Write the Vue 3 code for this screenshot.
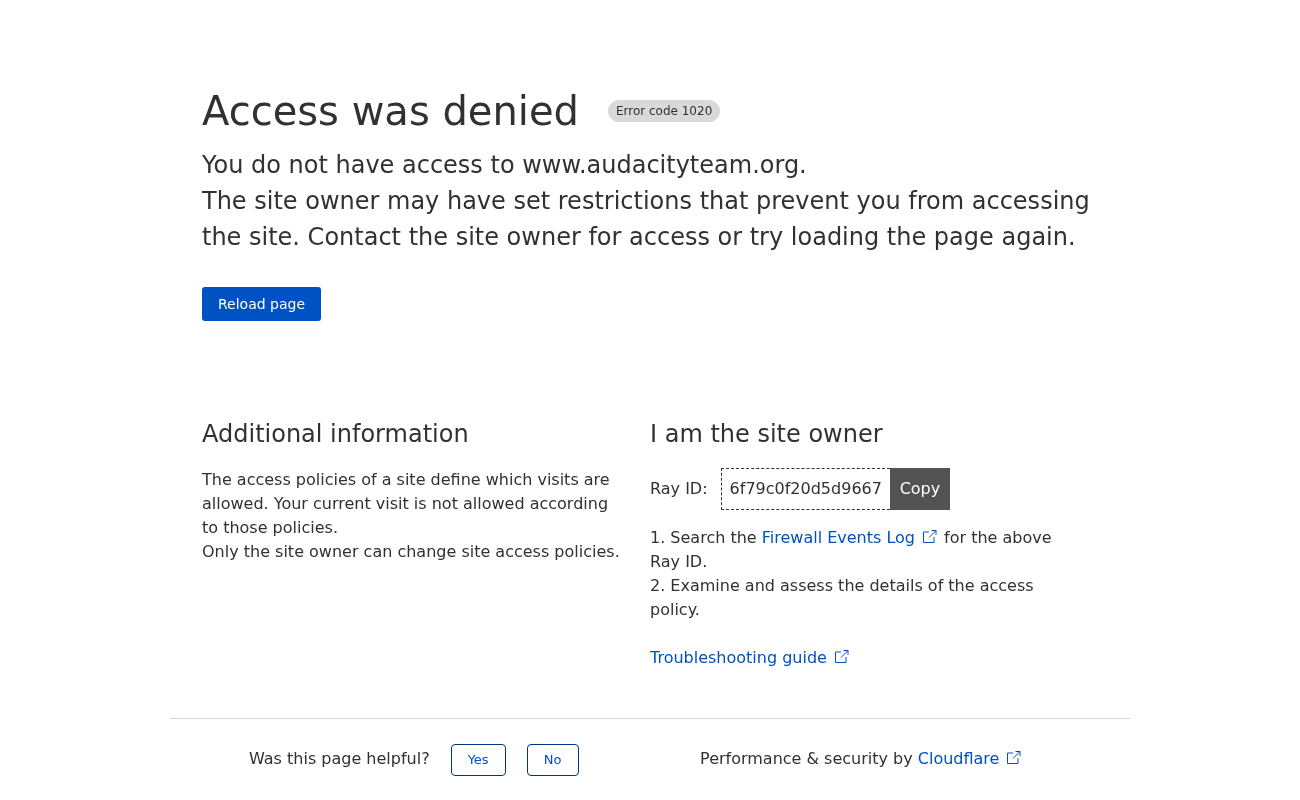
<script setup>
const steps = "M12 8v5.5H1.5V3H7M9.5 1.5H14V6M14 1.5L7 8.5";
</script>

<template>
  <div class="page">
    <main class="content">
      <header class="head">
        <div class="title-row">
          <h1>Access was denied</h1>
          <span class="code">Error code 1020</span>
        </div>
        <p class="lead">
          You do not have access to www.audacityteam.org.<br />
          The site owner may have set restrictions that prevent you from accessing the site. Contact the site owner for access or try loading the page again.
        </p>
        <button class="reload">Reload page</button>
      </header>

      <section class="columns">
        <div class="col">
          <h2>Additional information</h2>
          <p>
            The access policies of a site define which visits are allowed. Your current visit is not allowed according to those policies.<br />
            Only the site owner can change site access policies.
          </p>
        </div>
        <div class="col">
          <h2>I am the site owner</h2>
          <div class="ray">
            <span class="ray-label">Ray ID:</span>
            <span class="ray-value">6f79c0f20d5d9667</span>
            <button class="copy">Copy</button>
          </div>
          <p>
            1. Search the
            <a href="#">Firewall Events Log<svg class="ext" viewBox="0 0 16 16"><path :d="steps" /></svg></a>
            for the above Ray ID.<br />
            2. Examine and assess the details of the access policy.
          </p>
          <p class="guide">
            <a href="#">Troubleshooting guide<svg class="ext" viewBox="0 0 16 16"><path :d="steps" /></svg></a>
          </p>
        </div>
      </section>
    </main>

    <footer class="foot">
      <div class="helpful">
        <span>Was this page helpful?</span>
        <button class="vote yes">Yes</button>
        <button class="vote">No</button>
      </div>
      <div class="perf">
        Performance &amp; security by
        <a href="#">Cloudflare<svg class="ext" viewBox="0 0 16 16"><path :d="steps" /></svg></a>
      </div>
    </footer>
  </div>
</template>

<style>
html,
body {
  margin: 0;
  background: #fff;
}
</style>

<style scoped>
.page {
  width: 960px;
  margin: 0 auto;
  font-family: "DejaVu Sans", sans-serif;
  font-size: 16px;
  line-height: 24px;
  color: #313131;
  will-change: transform;
}

.content {
  padding: 81px 32px 0;
}

.title-row {
  display: flex;
  align-items: center;
  height: 60px;
}

h1 {
  margin: 0;
  font-size: 40px;
  font-weight: 400;
  line-height: 60px;
}

.code {
  margin-left: 29px;
  padding: 0 8px;
  height: 22px;
  line-height: 22px;
  border-radius: 11px;
  background: #d9d9d9;
  font-size: 12px;
}

.lead {
  margin: 5.5px 0 0;
  font-size: 24px;
  line-height: 36px;
}

.reload {
  display: block;
  margin-top: 32.5px;
  width: 119px;
  height: 34px;
  padding: 0;
  border: 0;
  border-radius: 3px;
  background: #0051c3;
  color: #fff;
  font: inherit;
  font-size: 14px;
}

.columns {
  display: grid;
  grid-template-columns: 448px 448px;
  margin-top: 95px;
}

.col {
  padding-right: 24px;
}

h2 {
  margin: 0 0 16px;
  font-size: 24px;
  font-weight: 400;
  line-height: 36px;
}

p {
  margin: 0;
}

a {
  color: #0051c3;
  text-decoration: none;
}

.ext {
  width: 16px;
  height: 16px;
  margin-left: 7px;
  margin-right: 1px;
  vertical-align: -2px;
  fill: none;
  stroke: #0051c3;
  stroke-width: 1;
}

.ray {
  display: flex;
  align-items: stretch;
  height: 42px;
  margin: 0 0 16px;
}

.ray-label {
  align-self: center;
  margin-right: 13px;
}

.ray-value {
  display: flex;
  align-items: center;
  padding: 0 8px;
  border: 1px dashed #313131;
  border-right: 0;
}

.copy {
  width: 60px;
  padding: 0;
  border: 0;
  background: #535353;
  color: #fff;
  font: inherit;
}

.guide {
  margin-top: 24px;
}

.foot {
  display: flex;
  align-items: center;
  margin-top: 48px;
  height: 80px;
  padding-left: 79px;
  border-top: 1px solid #d9d9d9;
  box-sizing: border-box;
}

.helpful {
  display: flex;
  align-items: center;
}

.vote {
  width: 52px;
  height: 32px;
  margin-left: 21px;
  margin-top: 2px;
  padding: 0;
  border: 1px solid #003681;
  border-radius: 4px;
  background: #fff;
  color: #0051c3;
  font: inherit;
  font-size: 13px;
}

.vote.yes {
  width: 55px;
}

.perf {
  margin-left: 121.4px;
}
</style>
